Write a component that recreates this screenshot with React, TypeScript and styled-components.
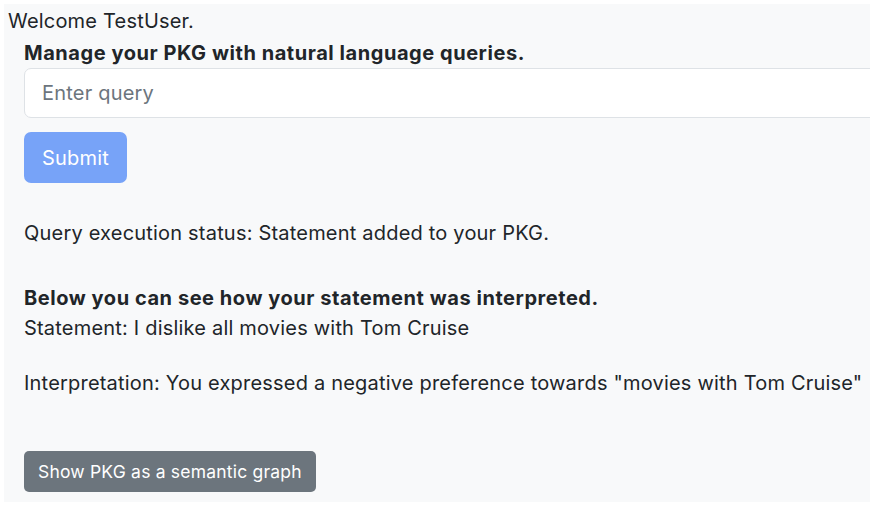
import styled, { createGlobalStyle } from 'styled-components';

const GlobalStyle = createGlobalStyle`
  html, body {
    margin: 0;
    padding: 0;
    background: #ffffff;
  }
  body {
    font-family: Inter, "Liberation Sans", sans-serif;
    font-size: 20px;
    line-height: 30px;
    letter-spacing: 0.2px;
    color: #212529;
  }
`

const Panel = styled('div')`
    margin: 4px;
    width: 866px;
    height: 498px;
    box-sizing: border-box;
    padding: 2px 0 0 4px;
    background: #f8f9fa;
    overflow: hidden;
`

const Welcome = styled('div')`
    height: 32px;
`

const Section = styled('div')`
    padding-left: 16px;
    display: flex;
    flex-direction: column;
    align-items: flex-start;
`

const Label = styled('label')`
    font-weight: 700;
    letter-spacing: 0.55px;
`

const QueryInput = styled('input')`
    box-sizing: border-box;
    width: 900px;
    height: 50px;
    padding: 0 17px;
    border: 1px solid #dee2e6;
    border-radius: 7px;
    background: #ffffff;
    font-family: inherit;
    font-size: 20px;
    letter-spacing: 0.2px;
    color: #212529;
    &::placeholder {
        color: #6c757d;
    }
`

const Button = styled('button')<{ $variant: 'primary' | 'secondary' }>`
    box-sizing: border-box;
    border: none;
    font-family: inherit;
    letter-spacing: 0.2px;
    color: #ffffff;
    cursor: pointer;
    ${p => p.$variant === 'primary' ? `
        margin-top: 14px;
        height: 51px;
        padding: 0 18px;
        border-radius: 7px;
        font-size: 20px;
        background: #77a3f8;
    ` : `
        margin-top: 53px;
        height: 41px;
        padding: 0 14px;
        border-radius: 5px;
        font-size: 17.5px;
        background: #6c757d;
    `}
`

const Status = styled('p')`
    margin: 35px 0 0;
`

const Result = styled('div')`
    margin-top: 35px;
`

const Strong = styled('div')`
    font-weight: 700;
    letter-spacing: 0.55px;
`

const Line = styled('p')<{ $gap?: number }>`
    margin: ${p => p.$gap ?? 0}px 0 0;
`

export default function App() {
    return (
        <>
            <GlobalStyle />
            <Panel>
                <Welcome>Welcome TestUser.</Welcome>
                <Section>
                    <Label htmlFor='query'>Manage your PKG with natural language queries.</Label>
                    <QueryInput id='query' placeholder='Enter query' />
                    <Button $variant='primary' disabled>Submit</Button>
                    <Status>Query execution status: Statement added to your PKG.</Status>
                    <Result>
                        <Strong>Below you can see how your statement was interpreted.</Strong>
                        <Line>Statement: I dislike all movies with Tom Cruise</Line>
                        <Line $gap={25}>Interpretation: You expressed a negative preference towards "movies with Tom Cruise"</Line>
                    </Result>
                    <Button $variant='secondary'>Show PKG as a semantic graph</Button>
                </Section>
            </Panel>
        </>
    )
}
